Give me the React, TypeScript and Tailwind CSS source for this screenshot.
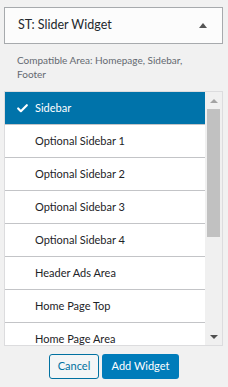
import { Check } from 'lucide-react';

const areas = [
  'Sidebar',
  'Optional Sidebar 1',
  'Optional Sidebar 2',
  'Optional Sidebar 3',
  'Optional Sidebar 4',
  'Header Ads Area',
  'Home Page Top',
  'Home Page Area',
];

export default function App() {
  return (
    <div
      className="w-[228px] h-[387px] bg-[#f1f1f1] overflow-hidden pt-[7px] pl-[4px] pr-[5px]"
      style={{ fontFamily: 'Lato, "Noto Sans", sans-serif' }}
    >
      {/* widget header */}
      <div className="h-[37px] bg-[#fcfcfc] border border-[#a7aaad] flex items-center justify-between pl-[13px] pr-[15px]">
        <span className="text-[12.5px] text-[#23282d]">ST: Slider Widget</span>
        <span className="w-0 h-0 border-l-[4px] border-r-[4px] border-b-[5px] border-l-transparent border-r-transparent border-b-[#555]" />
      </div>

      <p className="mt-[9px] pl-[13px] pr-[30px] text-[10px] leading-[14px] text-[#646970]">
        Compatible Area: Homepage, Sidebar, Footer
      </p>

      {/* area list */}
      <div className="mt-[10px] h-[255px] border border-[#dcdcde] bg-white flex overflow-hidden">
        <ul className="flex-1 overflow-hidden">
          {areas.map((a, i) => (
            <li
              key={a}
              className={
                i === 0
                  ? 'h-[33px] flex items-center bg-[#0073aa] text-white border-b border-[#c3c4c7] text-[11px]'
                  : 'h-[33px] flex items-center border-b border-[#c3c4c7] text-[11px] text-[#1d2327] shrink-0'
              }
            >
              <span className="w-[30px] flex justify-end pr-[6px]">
                {i === 0 && <Check size={13} strokeWidth={4} />}
              </span>
              {a}
            </li>
          ))}
        </ul>
        <div className="w-[17px] bg-[#f0f0f0] flex flex-col items-center">
          <div className="h-[17px] flex items-center justify-center">
            <span className="w-0 h-0 border-l-[4px] border-r-[4px] border-b-[4px] border-l-transparent border-r-transparent border-b-[#a3a3a3]" />
          </div>
          <div className="w-[13px] h-[128px] bg-[#c1c1c1]" />
          <div className="flex-1" />
          <div className="h-[17px] flex items-center justify-center">
            <span className="w-0 h-0 border-l-[4px] border-r-[4px] border-t-[4px] border-l-transparent border-r-transparent border-t-[#505050]" />
          </div>
        </div>
      </div>

      <div className="mt-[8px] flex justify-center gap-[3px] pl-[1px]">
        <button className="h-[25px] w-[50px] rounded-[3px] border border-[#0071a1] bg-[#f3f5f6] text-[#0071a1] text-[11px]">
          Cancel
        </button>
        <button className="h-[25px] w-[77px] rounded-[3px] bg-[#007cba] text-white text-[11px]">
          Add Widget
        </button>
      </div>
    </div>
  );
}
